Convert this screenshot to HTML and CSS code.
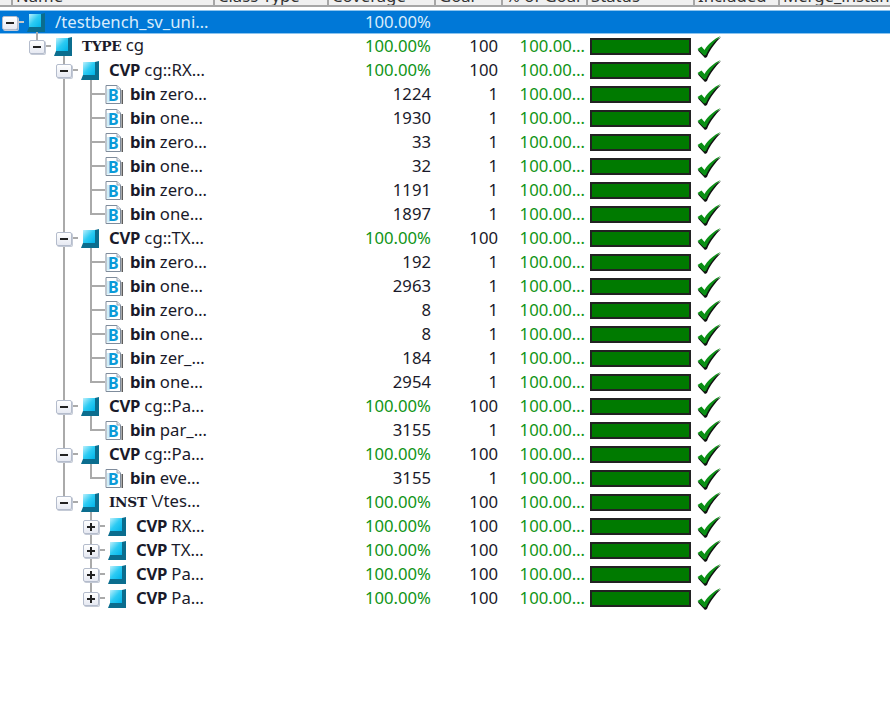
FILE: index.html
```html
<!DOCTYPE html>
<html lang="en">

<head>
    <meta charset="UTF-8" />
    <title>Covergroups</title>
    <link rel="stylesheet" href="styles.css">
</head>

<body>

    <svg class="defs" width="0" height="0">
        <defs>
            <linearGradient id="face" x1="0" y1="0" x2="1" y2="1">
                <stop offset="0" stop-color="#bdf0fc" />
                <stop offset="0.5" stop-color="#2ccbf3" />
                <stop offset="1" stop-color="#00b4ea" />
            </linearGradient>
            <symbol id="cube" viewBox="0 0 18 19">
                <polygon points="18,0 18,19 0,19 2,14 14,14 14,1" fill="#0b6d8e" />
                <rect x="2" y="1" width="12" height="13" fill="url(#face)" />
            </symbol>
            <symbol id="binicon" viewBox="0 0 18 21">
                <path d="M1 1.5H12L15.5 5V19.5H1Z" fill="#fff" stroke="#7f8c9c" />
                <path d="M12 1.5V5H15.5" fill="#e4e8ee" stroke="#98a4b2" />
                <rect x="2" y="5" width="3" height="13.5" fill="#cfeefa" />
                <path d="M17.2 6V20" stroke="#333" stroke-width="1.2" />
                <text x="3" y="16.5" class="bin-b">B</text>
            </symbol>
            <symbol id="check" viewBox="0 0 24 22">
                <path d="M1 14.5L5 12L8 15.5C12 9 18 4 24 1C19 6 13 13 10 21L8 22Z" fill="#111" />
                <path d="M0.5 13L4.5 10.5L7.5 14C11 8 17 3 23.7 0C18 5 12 12 9 19L7 19.5Z" fill="#0a8f14" />
            </symbol>
        </defs>
    </svg>

    <div class="head">
        <div class="cap cap-first">Name</div>
        <div class="cap">Class Type</div>
        <div class="cap">Coverage</div>
        <div class="cap">Goal</div>
        <div class="cap cap-wide">% of Goal</div>
        <div class="cap">Status</div>
        <div class="cap">Included</div>
        <div class="cap">Merge_instances</div>
    </div>

    <div class="tree">

        <div class="row selected">
            <div class="name"><span class="ind stub"><i class="box minus"></i></span><span class="node open"><svg><use href="#cube" /></svg></span><span class="label">/testbench_sv_uni…</span></div>
            <div></div>
            <div class="num">100.00%</div>
        </div>

        <div class="row">
            <div class="name"><span class="ind"></span><span class="ind last"><i class="box minus"></i></span><span class="node open"><svg><use href="#cube" /></svg></span><span class="label"><b class="kind">TYPE</b> cg</span></div>
            <div></div>
            <div class="num ok">100.00%</div>
            <div class="num">100</div>
            <div class="pct">100.00…</div>
            <div class="status"><div class="bar"></div></div>
            <div><svg class="tick"><use href="#check" /></svg></div>
        </div>

        <div class="row">
            <div class="name"><span class="ind"></span><span class="ind"></span><span class="ind tee"><i class="box minus"></i></span><span class="node open"><svg><use href="#cube" /></svg></span><span class="label"><b>CVP</b> cg::RX…</span></div>
            <div></div>
            <div class="num ok">100.00%</div>
            <div class="num">100</div>
            <div class="pct">100.00…</div>
            <div class="status"><div class="bar"></div></div>
            <div><svg class="tick"><use href="#check" /></svg></div>
        </div>
        <div class="row">
            <div class="name"><span class="ind"></span><span class="ind"></span><span class="ind pipe"></span><span class="ind tee"></span><svg class="bin"><use href="#binicon" /></svg><span class="label"><b>bin</b> zero…</span></div>
            <div></div>
            <div class="num">1224</div>
            <div class="num">1</div>
            <div class="pct">100.00…</div>
            <div class="status"><div class="bar"></div></div>
            <div><svg class="tick"><use href="#check" /></svg></div>
        </div>
        <div class="row">
            <div class="name"><span class="ind"></span><span class="ind"></span><span class="ind pipe"></span><span class="ind tee"></span><svg class="bin"><use href="#binicon" /></svg><span class="label"><b>bin</b> one…</span></div>
            <div></div>
            <div class="num">1930</div>
            <div class="num">1</div>
            <div class="pct">100.00…</div>
            <div class="status"><div class="bar"></div></div>
            <div><svg class="tick"><use href="#check" /></svg></div>
        </div>
        <div class="row">
            <div class="name"><span class="ind"></span><span class="ind"></span><span class="ind pipe"></span><span class="ind tee"></span><svg class="bin"><use href="#binicon" /></svg><span class="label"><b>bin</b> zero…</span></div>
            <div></div>
            <div class="num">33</div>
            <div class="num">1</div>
            <div class="pct">100.00…</div>
            <div class="status"><div class="bar"></div></div>
            <div><svg class="tick"><use href="#check" /></svg></div>
        </div>
        <div class="row">
            <div class="name"><span class="ind"></span><span class="ind"></span><span class="ind pipe"></span><span class="ind tee"></span><svg class="bin"><use href="#binicon" /></svg><span class="label"><b>bin</b> one…</span></div>
            <div></div>
            <div class="num">32</div>
            <div class="num">1</div>
            <div class="pct">100.00…</div>
            <div class="status"><div class="bar"></div></div>
            <div><svg class="tick"><use href="#check" /></svg></div>
        </div>
        <div class="row">
            <div class="name"><span class="ind"></span><span class="ind"></span><span class="ind pipe"></span><span class="ind tee"></span><svg class="bin"><use href="#binicon" /></svg><span class="label"><b>bin</b> zero…</span></div>
            <div></div>
            <div class="num">1191</div>
            <div class="num">1</div>
            <div class="pct">100.00…</div>
            <div class="status"><div class="bar"></div></div>
            <div><svg class="tick"><use href="#check" /></svg></div>
        </div>
        <div class="row">
            <div class="name"><span class="ind"></span><span class="ind"></span><span class="ind pipe"></span><span class="ind last"></span><svg class="bin"><use href="#binicon" /></svg><span class="label"><b>bin</b> one…</span></div>
            <div></div>
            <div class="num">1897</div>
            <div class="num">1</div>
            <div class="pct">100.00…</div>
            <div class="status"><div class="bar"></div></div>
            <div><svg class="tick"><use href="#check" /></svg></div>
        </div>

        <div class="row">
            <div class="name"><span class="ind"></span><span class="ind"></span><span class="ind tee"><i class="box minus"></i></span><span class="node open"><svg><use href="#cube" /></svg></span><span class="label"><b>CVP</b> cg::TX…</span></div>
            <div></div>
            <div class="num ok">100.00%</div>
            <div class="num">100</div>
            <div class="pct">100.00…</div>
            <div class="status"><div class="bar"></div></div>
            <div><svg class="tick"><use href="#check" /></svg></div>
        </div>
        <div class="row">
            <div class="name"><span class="ind"></span><span class="ind"></span><span class="ind pipe"></span><span class="ind tee"></span><svg class="bin"><use href="#binicon" /></svg><span class="label"><b>bin</b> zero…</span></div>
            <div></div>
            <div class="num">192</div>
            <div class="num">1</div>
            <div class="pct">100.00…</div>
            <div class="status"><div class="bar"></div></div>
            <div><svg class="tick"><use href="#check" /></svg></div>
        </div>
        <div class="row">
            <div class="name"><span class="ind"></span><span class="ind"></span><span class="ind pipe"></span><span class="ind tee"></span><svg class="bin"><use href="#binicon" /></svg><span class="label"><b>bin</b> one…</span></div>
            <div></div>
            <div class="num">2963</div>
            <div class="num">1</div>
            <div class="pct">100.00…</div>
            <div class="status"><div class="bar"></div></div>
            <div><svg class="tick"><use href="#check" /></svg></div>
        </div>
        <div class="row">
            <div class="name"><span class="ind"></span><span class="ind"></span><span class="ind pipe"></span><span class="ind tee"></span><svg class="bin"><use href="#binicon" /></svg><span class="label"><b>bin</b> zero…</span></div>
            <div></div>
            <div class="num">8</div>
            <div class="num">1</div>
            <div class="pct">100.00…</div>
            <div class="status"><div class="bar"></div></div>
            <div><svg class="tick"><use href="#check" /></svg></div>
        </div>
        <div class="row">
            <div class="name"><span class="ind"></span><span class="ind"></span><span class="ind pipe"></span><span class="ind tee"></span><svg class="bin"><use href="#binicon" /></svg><span class="label"><b>bin</b> one…</span></div>
            <div></div>
            <div class="num">8</div>
            <div class="num">1</div>
            <div class="pct">100.00…</div>
            <div class="status"><div class="bar"></div></div>
            <div><svg class="tick"><use href="#check" /></svg></div>
        </div>
        <div class="row">
            <div class="name"><span class="ind"></span><span class="ind"></span><span class="ind pipe"></span><span class="ind tee"></span><svg class="bin"><use href="#binicon" /></svg><span class="label"><b>bin</b> zer_…</span></div>
            <div></div>
            <div class="num">184</div>
            <div class="num">1</div>
            <div class="pct">100.00…</div>
            <div class="status"><div class="bar"></div></div>
            <div><svg class="tick"><use href="#check" /></svg></div>
        </div>
        <div class="row">
            <div class="name"><span class="ind"></span><span class="ind"></span><span class="ind pipe"></span><span class="ind last"></span><svg class="bin"><use href="#binicon" /></svg><span class="label"><b>bin</b> one…</span></div>
            <div></div>
            <div class="num">2954</div>
            <div class="num">1</div>
            <div class="pct">100.00…</div>
            <div class="status"><div class="bar"></div></div>
            <div><svg class="tick"><use href="#check" /></svg></div>
        </div>

        <div class="row">
            <div class="name"><span class="ind"></span><span class="ind"></span><span class="ind tee"><i class="box minus"></i></span><span class="node open"><svg><use href="#cube" /></svg></span><span class="label"><b>CVP</b> cg::Pa…</span></div>
            <div></div>
            <div class="num ok">100.00%</div>
            <div class="num">100</div>
            <div class="pct">100.00…</div>
            <div class="status"><div class="bar"></div></div>
            <div><svg class="tick"><use href="#check" /></svg></div>
        </div>
        <div class="row">
            <div class="name"><span class="ind"></span><span class="ind"></span><span class="ind pipe"></span><span class="ind last"></span><svg class="bin"><use href="#binicon" /></svg><span class="label"><b>bin</b> par_…</span></div>
            <div></div>
            <div class="num">3155</div>
            <div class="num">1</div>
            <div class="pct">100.00…</div>
            <div class="status"><div class="bar"></div></div>
            <div><svg class="tick"><use href="#check" /></svg></div>
        </div>

        <div class="row">
            <div class="name"><span class="ind"></span><span class="ind"></span><span class="ind tee"><i class="box minus"></i></span><span class="node open"><svg><use href="#cube" /></svg></span><span class="label"><b>CVP</b> cg::Pa…</span></div>
            <div></div>
            <div class="num ok">100.00%</div>
            <div class="num">100</div>
            <div class="pct">100.00…</div>
            <div class="status"><div class="bar"></div></div>
            <div><svg class="tick"><use href="#check" /></svg></div>
        </div>
        <div class="row">
            <div class="name"><span class="ind"></span><span class="ind"></span><span class="ind pipe"></span><span class="ind last"></span><svg class="bin"><use href="#binicon" /></svg><span class="label"><b>bin</b> eve…</span></div>
            <div></div>
            <div class="num">3155</div>
            <div class="num">1</div>
            <div class="pct">100.00…</div>
            <div class="status"><div class="bar"></div></div>
            <div><svg class="tick"><use href="#check" /></svg></div>
        </div>

        <div class="row">
            <div class="name"><span class="ind"></span><span class="ind"></span><span class="ind last"><i class="box minus"></i></span><span class="node open"><svg><use href="#cube" /></svg></span><span class="label"><b class="kind">INST</b> \/tes…</span></div>
            <div></div>
            <div class="num ok">100.00%</div>
            <div class="num">100</div>
            <div class="pct">100.00…</div>
            <div class="status"><div class="bar"></div></div>
            <div><svg class="tick"><use href="#check" /></svg></div>
        </div>
        <div class="row">
            <div class="name"><span class="ind"></span><span class="ind"></span><span class="ind"></span><span class="ind tee"><i class="box plus"></i></span><span class="node"><svg><use href="#cube" /></svg></span><span class="label"><b>CVP</b> RX…</span></div>
            <div></div>
            <div class="num ok">100.00%</div>
            <div class="num">100</div>
            <div class="pct">100.00…</div>
            <div class="status"><div class="bar"></div></div>
            <div><svg class="tick"><use href="#check" /></svg></div>
        </div>
        <div class="row">
            <div class="name"><span class="ind"></span><span class="ind"></span><span class="ind"></span><span class="ind tee"><i class="box plus"></i></span><span class="node"><svg><use href="#cube" /></svg></span><span class="label"><b>CVP</b> TX…</span></div>
            <div></div>
            <div class="num ok">100.00%</div>
            <div class="num">100</div>
            <div class="pct">100.00…</div>
            <div class="status"><div class="bar"></div></div>
            <div><svg class="tick"><use href="#check" /></svg></div>
        </div>
        <div class="row">
            <div class="name"><span class="ind"></span><span class="ind"></span><span class="ind"></span><span class="ind tee"><i class="box plus"></i></span><span class="node"><svg><use href="#cube" /></svg></span><span class="label"><b>CVP</b> Pa…</span></div>
            <div></div>
            <div class="num ok">100.00%</div>
            <div class="num">100</div>
            <div class="pct">100.00…</div>
            <div class="status"><div class="bar"></div></div>
            <div><svg class="tick"><use href="#check" /></svg></div>
        </div>
        <div class="row">
            <div class="name"><span class="ind"></span><span class="ind"></span><span class="ind"></span><span class="ind last"><i class="box plus"></i></span><span class="node"><svg><use href="#cube" /></svg></span><span class="label"><b>CVP</b> Pa…</span></div>
            <div></div>
            <div class="num ok">100.00%</div>
            <div class="num">100</div>
            <div class="pct">100.00…</div>
            <div class="status"><div class="bar"></div></div>
            <div><svg class="tick"><use href="#check" /></svg></div>
        </div>

    </div>

</body>

</html>
```

FILE: styles.css
```css
body {
    margin: 0;
    background: #fff;
    color: #1a1a2a;
    font-family: "Noto Sans", sans-serif;
    font-size: 16.7px;
    overflow: hidden;
}

.defs {
    display: block;
    height: 0;
}

.head,
.row {
    display: grid;
    grid-template-columns: 213px 114px 107px 67px 85px 107px 85px 112px;
}

.head {
    height: 5px;
    overflow: hidden;
    align-content: end;
    background: #f0f0f0;
    border-bottom: 2px solid #a6a6a6;
}

.cap {
    padding-left: 3px;
    line-height: 18px;
    height: 18px;
    color: #333;
    white-space: nowrap;
    overflow: hidden;
    border-left: 2px solid #a6a6a6;
    box-sizing: border-box;
}

.cap-first {
    margin-left: 11px;
}

.tree {
    margin-top: 3px;
}

.row {
    height: 24px;
    align-items: start;
    line-height: 24px;
}

.selected {
    box-sizing: border-box;
    background: #0078d7;
    border-top: 1px solid #8cc4ee;
    border-bottom: 1px solid #8cc4ee;
    color: #d8ecfb;
    line-height: 22px;
}

.name {
    display: flex;
    align-items: center;
    height: 24px;
    margin-left: -3px;
    white-space: nowrap;
}

.selected .name {
    height: 22px;
}

.ind {
    flex: none;
    width: 27px;
    height: 24px;
    display: flex;
    align-items: center;
}

.pipe {
    background: linear-gradient(#aaa, #aaa) 12px 0 / 2px 100% no-repeat;
}

.tee {
    background:
        linear-gradient(#aaa, #aaa) 12px 0 / 2px 100% no-repeat,
        linear-gradient(#aaa, #aaa) 12px 50% / 15px 2px no-repeat;
}

.last {
    background:
        linear-gradient(#aaa, #aaa) 12px 0 / 2px 50% no-repeat,
        linear-gradient(#aaa, #aaa) 12px 50% / 15px 2px no-repeat;
}

.stub {
    background: linear-gradient(#c8c8c8, #c8c8c8) 12px 50% / 15px 2px no-repeat;
}

.box {
    position: relative;
    display: block;
    box-sizing: border-box;
    width: 16px;
    height: 14px;
    margin: 1px 0 0 5px;
    background: linear-gradient(#fff, #e6e9f2);
    border: 1px solid #b4bccc;
    border-radius: 2px;
    box-shadow: 1px 1px 0 #c4cad6;
}

/* the minus and plus strokes sit on top of the button */
.minus::before,
.plus::before,
.plus::after {
    content: "";
    position: absolute;
    background: #222;
}

.minus::before,
.plus::before {
    left: 3px;
    top: 5px;
    width: 8px;
    height: 2px;
}

.plus::after {
    left: 6px;
    top: 2px;
    width: 2px;
    height: 8px;
}

.node {
    flex: none;
    width: 18px;
    height: 24px;
    margin-left: 3px;
    display: flex;
    align-items: flex-end;
}

.open {
    background: linear-gradient(#aaa, #aaa) 9px 100% / 2px 50% no-repeat;
}

.node svg {
    width: 18px;
    height: 19px;
    margin-bottom: 2px;
}

.bin {
    flex: none;
    width: 18px;
    height: 21px;
}

.bin-b {
    font-family: "Noto Sans", sans-serif;
    font-weight: 700;
    font-size: 16px;
    fill: #0a9ad8;
}

.label {
    margin: 0 0 1px 10px;
}

.bin + .label {
    margin-left: 7px;
}

.label b {
    letter-spacing: -0.3px;
}

.kind {
    font-family: "DejaVu Serif", serif;
    font-size: 13.7px;
}

.num {
    text-align: right;
    padding-right: 3px;
}

.ok,
.pct {
    color: #109416;
}

.pct {
    text-align: right;
    padding-right: 1px;
    white-space: nowrap;
}

.status {
    padding: 4px 0 0 4px;
}

.bar {
    box-sizing: border-box;
    width: 101px;
    height: 17px;
    background: #007a00;
    border: 2px solid #222;
}

.tick {
    display: block;
    width: 24px;
    height: 22px;
    margin: 2px 0 0 4px;
}
```
